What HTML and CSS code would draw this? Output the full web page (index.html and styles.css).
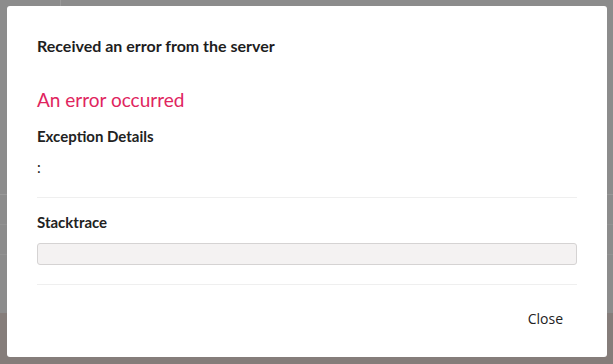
FILE: index.html
```html
<!DOCTYPE html>
<html lang="en">

<head>
  <meta charset="UTF-8">
  <meta name="viewport" content="width=device-width, initial-scale=1.0">
  <title>Error</title>
  <link rel="stylesheet" href="styles.css">
</head>

<body>
  <div class="page">
    <div class="page-top">
      <div class="page-tab"></div>
    </div>
    <div class="page-mid">
      <div class="page-row"></div>
      <div class="page-row"></div>
    </div>
    <div class="page-foot"></div>
  </div>

  <div class="backdrop">
    <div class="modal">
      <div class="modal-header">
        <h4 class="modal-title">Received an error from the server</h4>
      </div>
      <div class="modal-body">
        <h3 class="error-title">An error occurred</h3>
        <h5 class="section-title">Exception Details</h5>
        <p class="details">:</p>
        <hr class="divider">
        <h5 class="section-title stack-title">Stacktrace</h5>
        <pre class="stacktrace"></pre>
      </div>
      <div class="modal-footer">
        <button class="btn-close">Close</button>
      </div>
    </div>
  </div>
</body>

</html>
```

FILE: styles.css
```css
* {
  box-sizing: border-box;
}

body {
  margin: 0;
  width: 613px;
  height: 364px;
  overflow: hidden;
  font-family: Lato, "Open Sans", sans-serif;
  background: #8c8c8c;
}

.page {
  display: flex;
  flex-direction: column;
  height: 364px;
}

.page-top {
  height: 194px;
  position: relative;
}

.page-tab {
  margin-left: 60px;
  width: 1px;
  height: 7px;
  background: #9a9a9a;
}

.page-mid {
  height: 119px;
  border-top: 1px solid #999;
}

.page-row {
  height: 30px;
  border-bottom: 1px solid #939393;
}

.page-foot {
  flex-grow: 1;
  background: #857d7a;
}

.backdrop {
  position: absolute;
  top: 0;
  left: 0;
  right: 0;
  bottom: 0;
}

.modal {
  position: absolute;
  left: 7px;
  top: 6px;
  width: 600px;
  height: 351px;
  background: #fff;
  border-radius: 3px;
  display: flex;
  flex-direction: column;
}

.modal-header {
  padding: 30px 30px 0 30px;
}

.modal-title {
  margin: 0;
  font-size: 16px;
  line-height: 20px;
  font-weight: 700;
  color: #1e1e1e;
}

.modal-body {
  padding: 0 30px;
}

.error-title {
  margin: 32px 0 0 0;
  font-size: 19px;
  line-height: 24px;
  font-weight: 400;
  color: #e0245e;
}

.section-title {
  margin: 14px 0 0 0;
  font-size: 15px;
  line-height: 20px;
  font-weight: 700;
  color: #222;
}

.details {
  margin: 11px 0 0 0;
  font-size: 15px;
  line-height: 20px;
  color: #222;
}

.divider {
  margin: 20px 0 0 0;
  border: 0;
  border-top: 1px solid #efefef;
}

.stack-title {
  margin-top: 14px;
}

.stacktrace {
  margin: 11px 0 0 0;
  height: 22px;
  background: #f4f2f2;
  border: 1px solid #d5d3d3;
  border-radius: 3px;
}

.modal-footer {
  margin: 19px 30px 0 30px;
  border-top: 1px solid #efefef;
  display: flex;
  justify-content: flex-end;
  padding-top: 24px;
}

.btn-close {
  background: none;
  border: 0;
  padding: 0 14px 0 0;
  font-family: "Open Sans", sans-serif;
  font-size: 14px;
  line-height: 20px;
  color: #222;
}
```
